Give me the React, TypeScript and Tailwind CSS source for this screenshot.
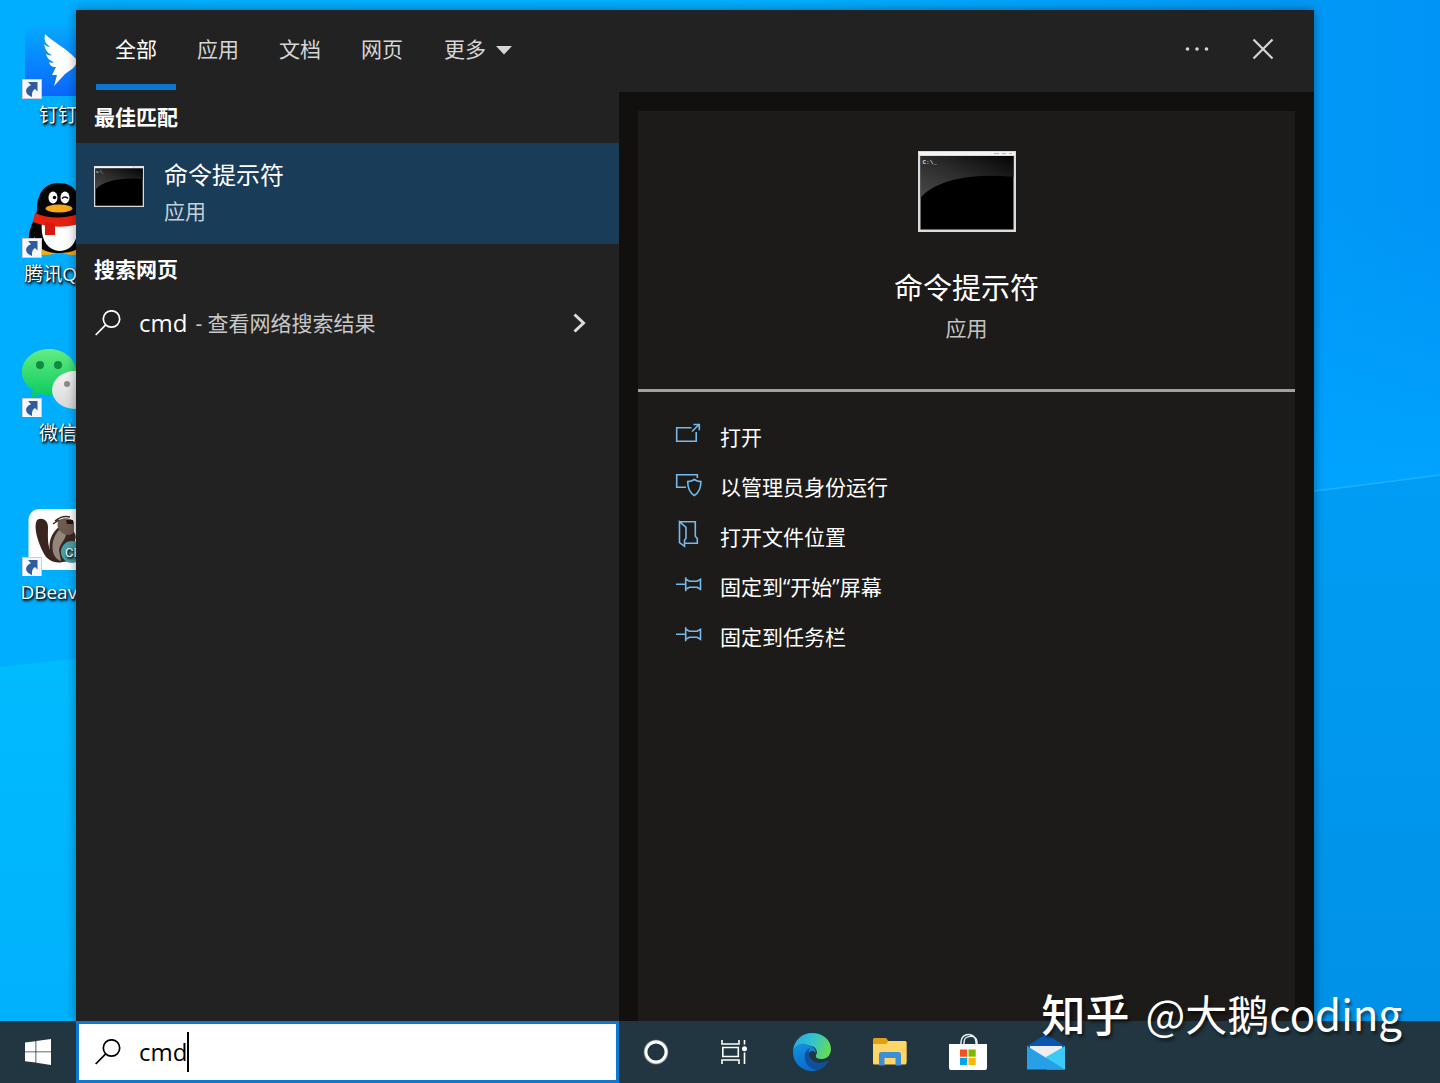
import React from "react";

function Wallpaper() {
  return (
    <svg className="absolute inset-0 h-full w-full" viewBox="0 0 1440 1083" preserveAspectRatio="none" aria-hidden="true">
      <defs>
        <linearGradient id="skyUpper" x1="0" y1="0" x2="1" y2="0">
          <stop offset="0" stopColor="#00aeff" />
          <stop offset="0.5" stopColor="#00b0ff" />
          <stop offset="1" stopColor="#0094f6" />
        </linearGradient>
        <linearGradient id="skyGlow" x1="0" y1="0" x2="0" y2="1">
          <stop offset="0.4" stopColor="#00a2ff" stopOpacity="0" />
          <stop offset="1" stopColor="#00a4ff" />
        </linearGradient>
        <linearGradient id="skyLower" x1="0" y1="0" x2="0" y2="1">
          <stop offset="0" stopColor="#009df4" />
          <stop offset="1" stopColor="#0090e6" />
        </linearGradient>
        <linearGradient id="skyLeft" x1="0" y1="0" x2="0" y2="1">
          <stop offset="0" stopColor="#00bbff" />
          <stop offset="1" stopColor="#00b0fb" />
        </linearGradient>
      </defs>
      <rect width="1440" height="1083" fill="url(#skyUpper)" />
      <path d="M1300 0h140v475l-140 18z" fill="url(#skyGlow)" />
      <path d="M1300 493l140-18v608h-140z" fill="url(#skyLower)" />
      <path d="M1300 493l140-18" stroke="#1fb0ff" strokeWidth="1.500" />
      <path d="M0 667l90-10v426H0z" fill="url(#skyLeft)" />
    </svg>
  );
}

function ShortcutArrow({ y = 56 }: { y?: number }) {
  return (
    <g transform={`translate(0 ${y})`}>
      <rect x="0.5" y="0.5" width="19" height="19" fill="#f6f8fb" stroke="#c9ced6" />
      <path d="M6 3h9.500v9.500l-2.500-2.500c-2.500 1.500-3.300 4-3 8C5.500 16.500 3.500 13.500 4.300 10.500 5 8.500 6.500 7 9 6.200z" fill="#2f5b9f" />
    </g>
  );
}

function DingTalk() {
  return (
    <svg width="72" height="76" viewBox="0 0 72 76" aria-hidden="true">
      <defs>
        <linearGradient id="ding" x1="0" y1="0" x2="0" y2="1">
          <stop offset="0" stopColor="#05a8ff" />
          <stop offset="1" stopColor="#0b66fb" />
        </linearGradient>
      </defs>
      <rect x="3" y="3" width="70" height="70" rx="12" fill="url(#ding)" />
      <path d="M23 11c8 8 21 14 31 25 2 4-1 7-4 10l-7 5-11 12 3-11h-5l4-8c-4 0-6-1-7-5 2 1 4 1 5 0-4-1-7-4-8-8 2 1 4 2 6 1-5-2-7-6-8-11 2 2 4 3 6 3-5-4-6-6-5-13z" fill="#fff" />
      <ShortcutArrow />
    </svg>
  );
}

function Penguin() {
  return (
    <svg width="72" height="76" viewBox="0 0 72 76" aria-hidden="true">
      <ellipse cx="23" cy="69" rx="13" ry="4" fill="#f2a818" />
      <ellipse cx="52" cy="69" rx="13" ry="4" fill="#f2a818" />
      <path d="M14 34c-4 7-8 16-7 24 2 2 6-3 8-7z" fill="#050505" />
      <path d="M37 1C22 1 15 12 15 28l-2 10c-3 9-1 20 5 27 6 8 32 8 40 0 6-8 5-20 1-28V28C59 12 52 1 37 1z" fill="#050505" />
      <path d="M20 40c-2 17 5 28 17 29 14 0 20-12 18-29z" fill="#fff" />
      <path d="M13 31c14 6 32 6 46 0v10c-12 5-34 5-48-1z" fill="#e6210f" />
      <path d="M23 40l10 2v11H23z" fill="#d8190b" />
      <ellipse cx="31" cy="15.500" rx="4.500" ry="6" fill="#fff" />
      <ellipse cx="43" cy="15.500" rx="4.500" ry="6" fill="#fff" />
      <circle cx="32.500" cy="15.500" r="1.800" fill="#050505" />
      <path d="M40 16.500q3-3 6 0" fill="none" stroke="#050505" strokeWidth="1.500" />
      <ellipse cx="37" cy="26.500" rx="13.500" ry="4" fill="#f5a81c" />
      <ShortcutArrow />
    </svg>
  );
}

function WeChat() {
  return (
    <svg width="72" height="76" viewBox="0 0 72 76" aria-hidden="true">
      <defs>
        <linearGradient id="wx" x1="0" y1="0" x2="0" y2="1">
          <stop offset="0" stopColor="#63ec84" />
          <stop offset="1" stopColor="#07c95b" />
        </linearGradient>
        <linearGradient id="wx2" x1="0" y1="0" x2="0" y2="1">
          <stop offset="0" stopColor="#f4f4f4" />
          <stop offset="1" stopColor="#d8d8d8" />
        </linearGradient>
      </defs>
      <path d="M27 8c15 0 27 10 27 23S42 54 27 54c-3 0-6-.5-9-1.300L9 58l2-9C4 45 0 38 0 31 0 18 12 8 27 8z" fill="url(#wx)" />
      <circle cx="18" cy="24" r="4" fill="#128a3f" />
      <circle cx="36" cy="24" r="4" fill="#128a3f" />
      <ellipse cx="53" cy="49" rx="23" ry="19" fill="url(#wx2)" />
      <circle cx="45" cy="43" r="3" fill="#8b8b8b" />
      <ShortcutArrow y={57} />
    </svg>
  );
}

function DBeaver() {
  return (
    <svg width="72" height="76" viewBox="0 0 72 76" aria-hidden="true">
      <rect x="6.500" y="9" width="62" height="61" rx="11" fill="#fff" />
      <path d="M15 20c5-3 11 0 11 7 0 10-1 19 4 27 4 5 8 7 13 7-8 4-18 0-22-9-5-10-10-25-6-32z" fill="#3a2420" />
      <path d="M29 57c-4-14 0-24 9-31l9 2c6 3 8 8 6 12l1 19c-7 4-17 4-25-2z" fill="#3a2722" />
      <path d="M31 52c-2-10 2-19 8-24l5 4c1 7-6 11-7 18l2 11c-4-1-7-5-8-9z" fill="#94867a" />
      <path d="M37 20c5-3 13-2 15 2v10c-3 4-9 4-13 0-3-2-5-8-2-12z" fill="#6e5b50" />
      <path d="M33 21q7-6 15-4M31 24l6-4" fill="none" stroke="#3a2722" strokeWidth="1.500" />
      <path d="M44 20h7v4h-6z" fill="#241714" />
      <circle cx="50" cy="52" r="11" fill="#4aa0a8" />
      <text x="43" y="57" fontSize="13" fontFamily="Roboto" fill="#fff">CE</text>
      <ShortcutArrow y={57} />
    </svg>
  );
}

function Terminal({ width, height, id }: { width: number; height: number; id: string }) {
  return (
    <svg className="shrink-0" width={width} height={height} viewBox="0 0 98 81" preserveAspectRatio="none" aria-hidden="true">
      <defs>
        <linearGradient id={id} x1="0" y1="1" x2="1" y2="0">
          <stop offset="0" stopColor="#4a4a4a" />
          <stop offset="0.5" stopColor="#2b2b2b" />
          <stop offset="1" stopColor="#050505" />
        </linearGradient>
      </defs>
      <rect width="98" height="81" fill="#dadbdd" />
      <rect x="1" y="1" width="96" height="3" fill="#f4f4f4" />
      <path d="M76 2.500h5M84 2.500h4M91 2.500h3" stroke="#b5b5b5" />
      <rect x="2.500" y="5" width="93" height="73.500" fill="#000" />
      <path d="M2.500 5h93v21C58 22 18 28 2.500 47z" fill={`url(#${id})`} />
      <text x="4.500" y="13" fontSize="6" fontWeight="700" fontFamily="Liberation Mono" fill="#dcdcdc">C:\_</text>
    </svg>
  );
}

function SearchIcon() {
  return (
    <svg className="shrink-0" width="26" height="26" viewBox="0 0 26 26" fill="none" stroke="currentColor" strokeWidth="1.700" aria-hidden="true">
      <circle cx="16.500" cy="9" r="8.200" />
      <path d="M10.700 14.800L0.700 25" />
    </svg>
  );
}

const line = { width: 28, height: 28, viewBox: "0 0 28 28", fill: "none", stroke: "#76b9ed", strokeWidth: 1.6 };

function OpenIcon() {
  return (
    <svg {...line} aria-hidden="true">
      <path d="M16.500 7.700H1.700v13.600h19.500V12M17 11.500l7-7M18.500 4.500h5.800v5.800" />
    </svg>
  );
}

function AdminIcon() {
  return (
    <svg {...line} aria-hidden="true">
      <path d="M22.300 8V4.700H1.700v12.600H11" />
      <path d="M19.300 9.500c-2 1.500-4 2-6.600 2.100 0 7 1.600 11 6.600 13.900 5-2.900 6.600-6.900 6.600-13.900-2.600-.1-4.600-.6-6.600-2.100z" />
    </svg>
  );
}

function FolderIcon() {
  return (
    <svg {...line} aria-hidden="true">
      <path d="M4.500 1.700h15.800v14.500l2 2.500v4.600H10M4.500 1.700v21l5 3.600v-6l1.500-2V7.300z" />
    </svg>
  );
}

function PinIcon() {
  return (
    <svg {...line} aria-hidden="true">
      <path d="M1 14.300h9.700M10.700 7.300v14M10.700 9.300l3.800 2h7.500l3.500-2v10l-3.500-2h-7.500l-3.800 2" />
    </svg>
  );
}

function WindowsLogo() {
  return (
    <svg width="26" height="26" viewBox="0 0 26 26" fill="#fff" aria-hidden="true">
      <path d="M0 3.600L10.500 2.200v10.300H0zM11.300 2.100L26 0v12.500H11.300zM0 13.300h10.500v10.300L0 22.200zM11.300 13.300H26V26l-14.700-2.200z" />
    </svg>
  );
}

function CortanaIcon() {
  return (
    <svg width="26" height="26" viewBox="0 0 26 26" fill="none" aria-hidden="true">
      <circle cx="13" cy="13" r="11.700" stroke="#8d999e" strokeWidth="1.200" />
      <circle cx="13" cy="13" r="10" stroke="#fff" strokeWidth="2.800" />
    </svg>
  );
}

function TaskViewIcon() {
  return (
    <svg width="26" height="26" viewBox="0 0 26 26" fill="none" stroke="#fff" strokeWidth="1.600" aria-hidden="true">
      <path d="M1 1v4h17V1M1 25v-4h17v4M1.800 8.500h15.500v9H1.800zM23.500 1v4.500M23.500 13.500V25" />
      <circle cx="23.500" cy="9.800" r="2.500" fill="#fff" stroke="none" />
    </svg>
  );
}

function EdgeIcon() {
  return (
    <svg width="38" height="38" viewBox="0 0 38 38" aria-hidden="true">
      <defs>
        <linearGradient id="edgeTop" x1="0" y1="0.300" x2="1" y2="0.600">
          <stop offset="0" stopColor="#25a9e0" />
          <stop offset="0.500" stopColor="#35c5cb" />
          <stop offset="1" stopColor="#68dd4c" />
        </linearGradient>
        <linearGradient id="edgeLeft" x1="0" y1="0" x2="0.400" y2="1">
          <stop offset="0" stopColor="#1392dc" />
          <stop offset="1" stopColor="#0a6ccc" />
        </linearGradient>
      </defs>
      <path d="M0 18C1 7 9 0 19 0c11 0 19 7 19 16 0 6-4 10-9 10-4 0-7-1-6-4 2-2 1-8-5-9C10 11 3 12 0 18z" fill="url(#edgeTop)" />
      <path d="M0 19c1-6 7-9 12-8 6 1 11 4 11 9-3-4-8-2-8 4 0 7 6 12 14 11l-2 1.300C14 42 0 33 0 19z" fill="url(#edgeLeft)" />
      <path d="M17 15c-4 2-6 6-5 11 1 6 6 11 13 11 4-1 8-4 10-8 1-1 0-2-1-1-8 4-16 1-18-6-.5-3 0-5 1-7z" fill="#104f9c" />
    </svg>
  );
}

function ExplorerIcon() {
  return (
    <svg width="34" height="28" viewBox="0 0 34 28" aria-hidden="true">
      <path d="M0 1.500Q0 0 1.500 0H13l2.500 3H32q1.500 0 1.500 1.500V24H0z" fill="#e0a012" />
      <path d="M0 6h13l2.500-3H32q1.500 0 1.500 1.500V25q0 1.500-1.500 1.500H1.500Q0 26.500 0 25z" fill="#fdd667" />
      <path d="M6 27.500V16.500q0-2.500 2.500-2.500h17q2.500 0 2.500 2.500v11h-5.500V20h-11v7.500z" fill="#3c8fd6" />
    </svg>
  );
}

function StoreIcon() {
  return (
    <svg width="38" height="38" viewBox="0 0 38 38" aria-hidden="true">
      <path d="M12 11V9c0-10 15-10 15 0v2M15 11V9c0-7 13-8 13 0v2" fill="none" stroke="#e9eef0" strokeWidth="1.500" />
      <path d="M0 11h38v24q0 2-2 2H2q-2 0-2-2z" fill="#fff" />
      <path d="M11 16.500h7.200v7.200H11z" fill="#f0511f" />
      <path d="M19.500 16.500h7.200v7.200h-7.200z" fill="#7db900" />
      <path d="M11 24.800h7.200V32H11z" fill="#06a3ed" />
      <path d="M19.500 24.800h7.200V32h-7.200z" fill="#fcb602" />
    </svg>
  );
}

function MailIcon() {
  return (
    <svg width="38" height="36" viewBox="0 0 38 36" aria-hidden="true">
      <path d="M0 12L17 1.500q2-1.200 4 0L38 12v4H0z" fill="#0b56ad" />
      <path d="M3 12h32v6L19 26 3 18z" fill="#eceef0" />
      <path d="M38 12v23.500H20l-1-12.500z" fill="#3dcaf7" />
      <path d="M0 12l38 23.500H0z" fill="#27a0e8" />
    </svg>
  );
}

const shortcuts = [
  { label: "钉钉", Icon: DingTalk },
  { label: "腾讯QQ", Icon: Penguin },
  { label: "微信", Icon: WeChat },
  { label: "DBeaver", Icon: DBeaver },
];

const actions = [
  { label: "打开", Icon: OpenIcon },
  { label: "以管理员身份运行", Icon: AdminIcon },
  { label: "打开文件位置", Icon: FolderIcon },
  { label: "固定到“开始”屏幕", Icon: PinIcon },
  { label: "固定到任务栏", Icon: PinIcon },
];

const taskbarApps = [
  { label: "Cortana", Icon: CortanaIcon },
  { label: "Task View", Icon: TaskViewIcon },
  { label: "Edge", Icon: EdgeIcon },
  { label: "Explorer", Icon: ExplorerIcon },
  { label: "Store", Icon: StoreIcon },
  { label: "Mail", Icon: MailIcon },
];

function Tabs() {
  return (
    <header className="flex h-[82px] items-start bg-[#222222] pl-5 text-[#d6d6d6]">
      <nav className="flex gap-[2px]">
        <button className="h-20 w-20 border-b-6 border-[#0f76d0] pt-[6px] text-[21px] text-white">全部</button>
        <button className="h-20 w-20 text-[21px]">应用</button>
        <button className="h-20 w-20 text-[21px]">文档</button>
        <button className="h-20 w-20 text-[21px]">网页</button>
        <button className="flex h-20 items-center gap-[10px] px-5 text-[21px]">
          更多
          <svg width="16" height="9" viewBox="0 0 16 9" fill="currentColor" aria-hidden="true">
            <path d="M0 0h16L8 8.500z" />
          </svg>
        </button>
      </nav>
      <div className="ml-auto flex h-[78px] items-center gap-[26px] pr-[31px]">
        <button className="flex h-10 w-10 items-center justify-center" aria-label="选项">
          <svg width="24" height="4" viewBox="0 0 24 4" fill="currentColor" aria-hidden="true">
            <circle cx="2.500" cy="2" r="1.800" />
            <circle cx="12" cy="2" r="1.800" />
            <circle cx="21.500" cy="2" r="1.800" />
          </svg>
        </button>
        <button className="flex h-10 w-10 items-center justify-center" aria-label="关闭">
          <svg width="22" height="22" viewBox="0 0 22 22" fill="none" stroke="currentColor" strokeWidth="2.200" aria-hidden="true">
            <path d="M1.500 1.500l19 19M20.500 1.500l-19 19" />
          </svg>
        </button>
      </div>
    </header>
  );
}

function Results() {
  return (
    <section className="w-[543px] shrink-0 bg-[#222222] text-white">
      <h2 className="flex h-[51px] items-center pl-[18px] text-[21px] font-bold">最佳匹配</h2>
      <button className="flex h-[101px] w-full items-start gap-5 bg-[#193c59] pt-[14px] pl-[18px] text-left">
        <span className="mt-[9px]">
          <Terminal width={50} height={41} id="termSmall" />
        </span>
        <span className="flex flex-col gap-1">
          <span className="text-2xl leading-9">命令提示符</span>
          <span className="text-[21px] leading-7 text-[#c6d0d8]">应用</span>
        </span>
      </button>
      <h2 className="flex h-[52px] items-center pl-[18px] text-[21px] font-bold">搜索网页</h2>
      <button className="flex h-[54px] w-full items-center pr-[33px] pl-[19px] text-left">
        <SearchIcon />
        <span className="ml-[18px] text-2xl leading-8">cmd</span>
        <span className="ml-2 text-[21px] leading-8 text-[#c9c9c9]">- 查看网络搜索结果</span>
        <svg className="ml-auto" width="13" height="20" viewBox="0 0 13 20" fill="none" stroke="#dcdcdc" strokeWidth="3" aria-hidden="true">
          <path d="M1.500 1.500L10.500 10l-9 8.500" />
        </svg>
      </button>
    </section>
  );
}

function Details() {
  return (
    <section className="flex flex-1 flex-col bg-[#11100e] px-[19px] pt-[19px]">
      <div className="flex-1 bg-[#1c1b19] text-white">
        <div className="flex h-[281px] flex-col items-center border-b-3 border-[#a2a1a0] pt-10">
          <Terminal width={98} height={81} id="termLarge" />
          <h1 className="mt-9 text-[29px] leading-10">命令提示符</h1>
          <p className="mt-1 text-[21px] leading-8 text-[#c4c4c3]">应用</p>
        </div>
        <ul className="flex flex-col pt-5">
          {actions.map(({ label, Icon }) => (
            <li key={label}>
              <button className="flex h-[50px] w-full items-start gap-[17px] pt-2 pl-[37px] text-left text-[21px] leading-[34px]">
                <Icon />
                {label}
              </button>
            </li>
          ))}
        </ul>
      </div>
    </section>
  );
}

export default function App() {
  return (
    <div className="relative flex min-h-screen flex-col overflow-hidden bg-[#00a8ff] font-['Open_Sans','Noto_Sans_CJK_SC',sans-serif]">
      <Wallpaper />
      <main className="relative flex flex-1">
        <aside className="w-[76px] shrink-0 overflow-hidden">
          <ul className="flex w-[116px] flex-col gap-[53px] pt-[23px]">
            {shortcuts.map(({ label, Icon }) => (
              <li key={label}>
                <a href="#" className="flex flex-col items-center gap-[2px] text-[19px] leading-7 text-white [text-shadow:1px_1px_2px_#000,1px_2px_3px_#000]">
                  <Icon />
                  {label}
                </a>
              </li>
            ))}
          </ul>
        </aside>
        <div className="mt-[10px] mr-[126px] flex flex-1 flex-col shadow-[0_0_10px_rgba(0,0,0,0.4)]">
          <Tabs />
          <div className="flex flex-1">
            <Results />
            <Details />
          </div>
        </div>
      </main>
      <footer className="relative flex h-[62px] bg-[#213640]">
        <button className="flex w-[76px] items-center justify-center" aria-label="开始">
          <WindowsLogo />
        </button>
        <label className="flex w-[543px] items-center gap-[18px] border-3 border-[#0f78d0] bg-white pl-4 text-black">
          <SearchIcon />
          <span className="flex items-center">
            <input aria-label="搜索" defaultValue="cmd" className="field-sizing-content bg-transparent text-2xl text-black outline-none" />
            <span className="h-10 w-[2px] bg-black" />
          </span>
        </label>
        <div className="flex gap-[30px] pl-[13px]">
          {taskbarApps.map(({ label, Icon }) => (
            <button key={label} aria-label={label} className="flex w-12 items-center justify-center">
              <Icon />
            </button>
          ))}
        </div>
      </footer>
      <p className="absolute right-[38px] bottom-10 flex gap-4 font-['Noto_Sans_CJK_SC',sans-serif] text-[42px] leading-[60px] text-white [text-shadow:2px_3px_3px_rgba(0,0,0,0.5)]">
        <span className="text-[44px] font-medium">知乎</span>
        <span>@大鹅coding</span>
      </p>
    </div>
  );
}
